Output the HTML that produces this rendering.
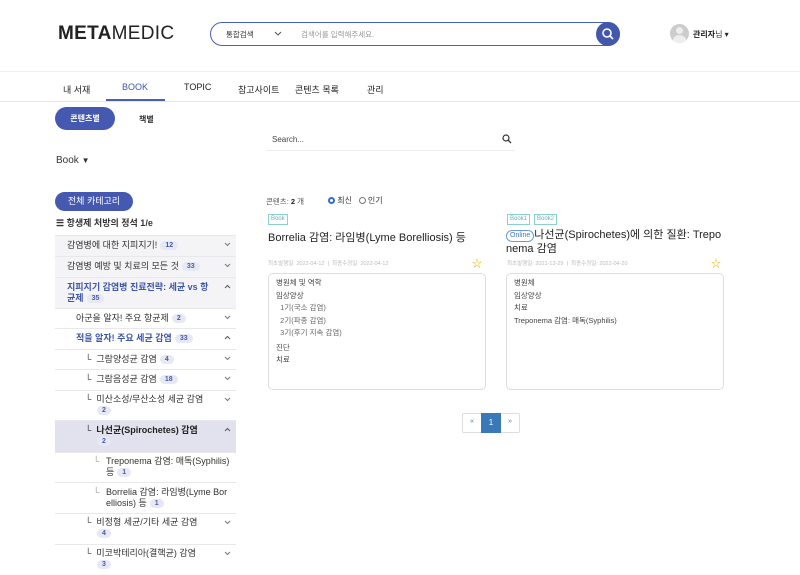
<!DOCTYPE html>
<html><head><meta charset="utf-8"><style>
*{margin:0;padding:0;box-sizing:border-box}
body{width:800px;height:575px;overflow:hidden;background:#fff;font-family:"Liberation Sans","Noto Sans CJK KR",sans-serif;color:#333;position:relative}
.a{position:absolute}
.logo{left:58px;top:23px;font-size:19px;letter-spacing:0.3px;color:#222}
.sb{left:210px;top:22px;width:410px;height:24px;border:1.5px solid #4a60b4;border-radius:12px}
.sbtn{left:596px;top:22px;width:24px;height:24px;border-radius:50%;background:#4357ad}
.nav{font-size:9px;top:83px;color:#222}
.pill{background:#4659b0;color:#fff;border-radius:11px;font-size:8.5px;text-align:center}
.row{position:absolute;left:55px;width:181px;border-top:1px solid #e8e8ec;font-size:9px;color:#333;line-height:11px;word-break:break-all}
.cnt{display:inline-block;background:#e6e8f3;color:#4a5aa8;border-radius:6px;font-size:7px;padding:0 5px;line-height:9px;vertical-align:middle;margin-left:3px;font-weight:bold}
.chev{position:absolute;right:5px;top:6px;width:7px;height:5px}
.tag{border:1px solid #8cd0cd;color:#5bb8b3;font-size:6px;padding:1px 2px;line-height:7px}
.card{border:1px solid #ddd;border-radius:5px;width:218px;height:117px;top:273px;font-size:7.5px;line-height:12.5px;padding:3px 7px;color:#444}
.meta{font-size:5.5px;color:#bbb;top:259px}
.lk{position:absolute;left:38px;top:3px;color:#999}
</style></head><body>
<div class="a logo"><b style="font-weight:700">META</b>MEDIC</div>
<div class="a sb"></div>
<div class="a" style="left:226px;top:29px;font-size:7.5px;color:#333">통합검색</div>
<svg class="a" style="left:274px;top:31px" width="8" height="6"><path d="M1 1 L4 4 L7 1" stroke="#555" fill="none"/></svg>
<div class="a" style="left:301px;top:29px;font-size:7.5px;color:#999">검색어를 입력해주세요.</div>
<div class="a sbtn"><svg width="24" height="24"><circle cx="11" cy="11" r="4" stroke="#fff" stroke-width="1.6" fill="none"/><line x1="14" y1="14" x2="17" y2="17" stroke="#fff" stroke-width="1.6"/></svg></div>
<div class="a" style="left:670px;top:24px;width:19px;height:19px;border-radius:50%;background:#ccc;overflow:hidden"><div style="position:absolute;left:6px;top:3px;width:7px;height:7px;border-radius:50%;background:#eee"></div><div style="position:absolute;left:3px;top:11px;width:13px;height:10px;border-radius:50%;background:#eee"></div></div>
<div class="a" style="left:693px;top:29px;font-size:8px;color:#222"><b>관리자</b>님 ▾</div>
<div class="a" style="left:0;top:71px;width:800px;height:1px;background:#eee"></div>
<div class="a" style="left:0;top:101px;width:800px;height:1px;background:#e6e6e6"></div>
<div class="a nav" style="left:63px">내 서재</div>
<div class="a nav" style="left:122px;top:82px;color:#3e56a8">BOOK</div>
<div class="a" style="left:106px;top:99px;width:59px;height:2px;background:#4a60b4"></div>
<div class="a nav" style="left:184px;top:82px">TOPIC</div>
<div class="a nav" style="left:238px">참고사이트</div>
<div class="a nav" style="left:295px">콘텐츠 목록</div>
<div class="a nav" style="left:367px">관리</div>
<div class="a pill" style="left:55px;top:107px;width:60px;height:23px;line-height:23px;border-radius:12px;font-weight:bold;font-size:8px">콘텐츠별</div>
<div class="a" style="left:139px;top:114px;font-size:8px;font-weight:bold">책별</div>
<div class="a" style="left:272px;top:135px;font-size:8px;color:#444">Search...</div>
<div class="a" style="left:266px;top:150px;width:249px;height:1px;background:#eee"></div>
<svg class="a" style="left:502px;top:134px" width="10" height="10"><circle cx="4" cy="4" r="3" stroke="#333" stroke-width="1.2" fill="none"/><line x1="6.2" y1="6.2" x2="9" y2="9" stroke="#333" stroke-width="1.3"/></svg>
<div class="a" style="left:56px;top:155px;font-size:10px;color:#333">Book <span style="font-size:8px">▼</span></div>
<div class="a pill" style="left:55px;top:192px;width:78px;height:19px;line-height:19px;font-size:9px">전체 카테고리</div>
<div class="a" style="left:56px;top:216px;font-size:9px;font-weight:bold;color:#333">☰ 항생제 처방의 정석 1/e</div>

<div class="row" style="top:235px;height:21px;background:#f4f4f7;padding:4px 12px">감염병에 대한 지피지기!<span class="cnt">12</span><svg class="chev"><path d="M1 1 L3.5 3.5 L6 1" stroke="#777" fill="none"/></svg></div>
<div class="row" style="top:256px;height:21px;background:#f4f4f7;padding:4px 12px">감염병 예방 및 치료의 모든 것<span class="cnt">33</span><svg class="chev"><path d="M1 1 L3.5 3.5 L6 1" stroke="#777" fill="none"/></svg></div>
<div class="row" style="top:277px;height:31px;background:#f4f4f7;padding:4px 22px 0 12px;color:#3e56a8;font-weight:bold">지피지기 감염병 진료전략: 세균 vs 항균제<span class="cnt">35</span><svg class="chev"><path d="M1 4 L3.5 1.5 L6 4" stroke="#555" fill="none"/></svg></div>
<div class="row" style="top:308px;height:20px;padding:4px 21px">아군을 알자! 주요 항균제<span class="cnt">2</span><svg class="chev"><path d="M1 1 L3.5 3.5 L6 1" stroke="#777" fill="none"/></svg></div>
<div class="row" style="top:328px;height:21px;padding:4px 21px;color:#3e56a8;font-weight:bold">적을 알자! 주요 세균 감염<span class="cnt">33</span><svg class="chev"><path d="M1 4 L3.5 1.5 L6 4" stroke="#555" fill="none"/></svg></div>
<div class="row" style="top:349px;height:20px;padding:4px 30px">└ &nbsp;그람양성균 감염<span class="cnt">4</span><svg class="chev"><path d="M1 1 L3.5 3.5 L6 1" stroke="#777" fill="none"/></svg></div>
<div class="row" style="top:369px;height:21px;padding:4px 30px">└ &nbsp;그람음성균 감염<span class="cnt">18</span><svg class="chev"><path d="M1 1 L3.5 3.5 L6 1" stroke="#777" fill="none"/></svg></div>
<div class="row" style="top:390px;height:30px;padding:3px 20px 0 30px">└ &nbsp;미산소성/무산소성 세균 감염<br><span class="cnt" style="margin-left:12px">2</span><svg class="chev"><path d="M1 1 L3.5 3.5 L6 1" stroke="#777" fill="none"/></svg></div>
<div class="row" style="top:420px;height:32px;padding:4px 20px 0 30px;background:#e2e2ee;font-weight:bold;color:#222">└ &nbsp;나선균(Spirochetes) 감염<br><span class="cnt" style="margin-left:12px">2</span><svg class="chev"><path d="M1 4 L3.5 1.5 L6 4" stroke="#555" fill="none"/></svg></div>
<div class="row" style="top:452px;height:30px;padding:3px 6px 0 51px"><span class="lk">└</span>Treponema 감염: 매독(Syphilis) 등<span class="cnt">1</span></div>
<div class="row" style="top:482px;height:31px;padding:4px 6px 0 51px"><span class="lk" style="top:4px">└</span>Borrelia 감염: 라임병(Lyme Borelliosis) 등<span class="cnt">1</span></div>
<div class="row" style="top:513px;height:31px;padding:3px 20px 0 30px">└ &nbsp;비정형 세균/기타 세균 감염<br><span class="cnt" style="margin-left:12px">4</span><svg class="chev"><path d="M1 1 L3.5 3.5 L6 1" stroke="#777" fill="none"/></svg></div>
<div class="row" style="top:544px;height:31px;padding:3px 20px 0 30px">└ &nbsp;미코박테리아(결핵균) 감염<br><span class="cnt" style="margin-left:12px">3</span><svg class="chev"><path d="M1 1 L3.5 3.5 L6 1" stroke="#777" fill="none"/></svg></div>

<div class="a" style="left:266px;top:196px;font-size:7.5px;color:#555">콘텐츠: <b style="color:#222">2</b> 개</div>
<div class="a" style="left:328px;top:195px;font-size:8px;color:#333"><span style="display:inline-block;width:7px;height:7px;border-radius:50%;border:2px solid #2b6fd6;vertical-align:-1px"></span> 최신 &nbsp;&nbsp;<span style="display:inline-block;width:7px;height:7px;border-radius:50%;border:1px solid #777;vertical-align:-1px"></span> 인기</div>

<div class="a tag" style="left:268px;top:214px">Book</div>
<div class="a" style="left:268px;top:229px;font-size:11px;color:#222">Borrelia 감염: 라임병(Lyme Borelliosis) 등</div>
<div class="a meta" style="left:268px">최초발행일: 2022-04-12 &nbsp;| &nbsp;최종수정일: 2022-04-12</div>
<div class="a" style="left:472px;top:255px;font-size:10px;color:#e6b400">☆</div>
<div class="a card" style="left:268px">병원체 및 역학<br>임상양상<br><span style="color:#666">&nbsp;&nbsp;1기(국소 감염)<br>&nbsp;&nbsp;2기(파종 감염)<br>&nbsp;&nbsp;3기(후기 지속 감염)</span><br><div style="margin-top:2px">진단<br>치료</div></div>

<div class="a tag" style="left:507px;top:214px">Book1</div>
<div class="a tag" style="left:534px;top:214px">Book2</div>
<div class="a" style="left:506px;top:228px;width:216px;font-size:11px;line-height:14px;color:#222;word-break:break-all"><span style="display:inline-block;border:1px solid #6b9ad8;color:#3a78c8;border-radius:8px;font-size:7px;line-height:10px;padding:0 3px;vertical-align:1px">Online</span>나선균(Spirochetes)에 의한 질환: Treponema 감염</div>
<div class="a meta" style="left:507px">최초발행일: 2021-12-29 &nbsp;| &nbsp;최종수정일: 2022-04-20</div>
<div class="a" style="left:711px;top:255px;font-size:10px;color:#e6b400">☆</div>
<div class="a card" style="left:506px">병원체<br>임상양상<br>치료<br>Treponema 감염: 매독(Syphilis)</div>

<div class="a" style="left:462px;top:413px;width:58px;height:20px;border:1px solid #ddd;border-radius:2px"></div>
<div class="a" style="left:470px;top:418px;font-size:7px;color:#4a7ab0">«</div>
<div class="a" style="left:481px;top:413px;width:20px;height:20px;background:#3a79b8;color:#fff;font-size:8px;text-align:center;line-height:20px">1</div>
<div class="a" style="left:508px;top:418px;font-size:7px;color:#4a7ab0">»</div>
</body></html>
